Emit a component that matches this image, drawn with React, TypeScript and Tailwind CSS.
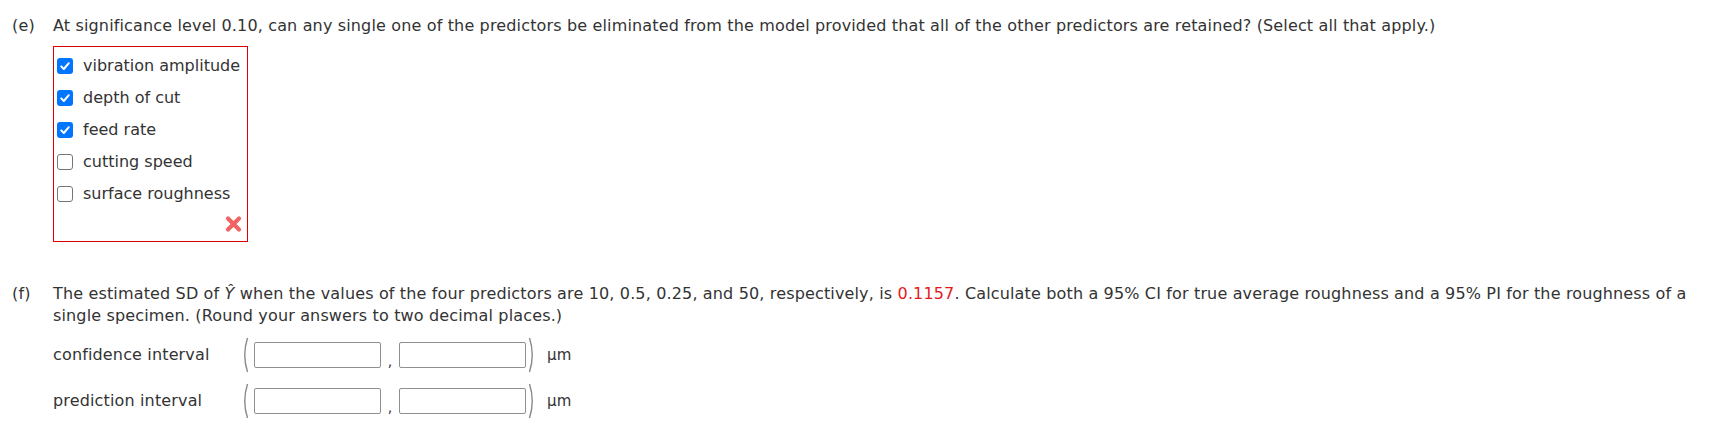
import React from "react";

const options = [
  { label: "vibration amplitude", checked: true },
  { label: "depth of cut", checked: true },
  { label: "feed rate", checked: true },
  { label: "cutting speed", checked: false },
  { label: "surface roughness", checked: false },
];

function Box({ checked }: { checked: boolean }) {
  if (checked) {
    return (
      <span className="w-[16px] h-[16px] rounded-[3px] bg-[#0075ff] flex items-center justify-center shrink-0">
        <svg width="12" height="12" viewBox="0 0 12 12">
          <path d="M2.2 6.4 L4.8 9 L9.8 3.2" fill="none" stroke="#fff" strokeWidth="2" strokeLinecap="round" strokeLinejoin="round" />
        </svg>
      </span>
    );
  }
  return <span className="w-[16px] h-[16px] rounded-[3px] border border-[#767676] bg-white shrink-0" />;
}

function Paren({ right = false }: { right?: boolean }) {
  return (
    <svg width="8" height="36" viewBox="0 0 8 36" className="shrink-0">
      <path
        d={right ? "M1.5 1 Q7 18 1.5 35" : "M6.5 1 Q1 18 6.5 35"}
        fill="none"
        stroke="#8a8a8a"
        strokeWidth="1.4"
      />
    </svg>
  );
}

function IntervalRow({ label }: { label: string }) {
  return (
    <div className="flex items-center h-[36px]">
      <span className="w-[188px] shrink-0">{label}</span>
      <Paren />
      <span className="ml-[5px] w-[127px] h-[26px] border border-[#8f8f8f] rounded-[2px] bg-white" />
      <span className="w-[18px] text-center self-end mb-[5px] leading-none text-[14px]">,</span>
      <span className="w-[127px] h-[26px] border border-[#8f8f8f] rounded-[2px] bg-white" />
      <span className="ml-[2px]">
        <Paren right />
      </span>
      <span className="ml-[11px] text-[15px]">μm</span>
    </div>
  );
}

export default function App() {
  return (
    <div className="w-[1728px] h-[441px] bg-white text-[#333] text-[16px] leading-[22px] tracking-[0.15px] font-['DejaVu_Sans',Verdana,sans-serif] overflow-hidden">
      <div className="flex pl-[12px] pt-[15px]">
        <span className="w-[41px] shrink-0">(e)</span>
        <div className="flex flex-col">
          <p className="whitespace-nowrap">
            At significance level 0.10, can any single one of the predictors be eliminated from the model provided that all of the other predictors are retained? (Select all that apply.)
          </p>
          <div className="mt-[9px] w-[195px] h-[196px] border border-[#e00000] pl-[3px] pt-[3px] flex flex-col">
            {options.map((o) => (
              <label key={o.label} className="flex items-center gap-[10px] h-[32px] whitespace-nowrap tracking-normal">
                <Box checked={o.checked} />
                <span>{o.label}</span>
              </label>
            ))}
            <div className="flex justify-end pr-[5px] mt-[5px]">
              <svg width="17" height="18" viewBox="0 0 17 18">
                <path d="M3 3.5 L14 14.5 M14 3.5 L3 14.5" stroke="#f36363" strokeWidth="4.2" strokeLinecap="round" />
              </svg>
            </div>
          </div>
        </div>
      </div>

      <div className="flex pl-[12px] mt-[41px]">
        <span className="w-[41px] shrink-0">(f)</span>
        <div className="flex flex-col">
          <p className="whitespace-nowrap">
            The estimated SD of <span className="italic">Ŷ</span> when the values of the four predictors are 10, 0.5, 0.25, and 50, respectively, is{" "}
            <span className="text-[#e41b1b]">0.1157</span>. Calculate both a 95% CI for true average roughness and a 95% PI for the roughness of a
            <br />
            single specimen. (Round your answers to two decimal places.)
          </p>
          <div className="mt-[10px] flex flex-col gap-[10px]">
            <IntervalRow label="confidence interval" />
            <IntervalRow label="prediction interval" />
          </div>
        </div>
      </div>
    </div>
  );
}
